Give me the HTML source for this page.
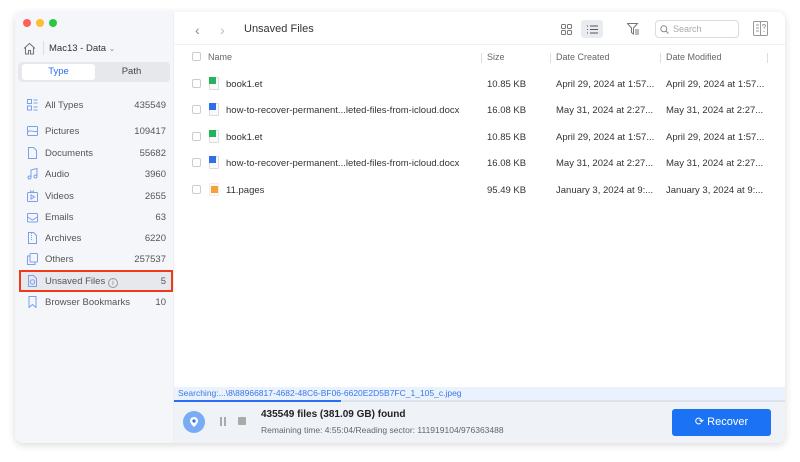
<!DOCTYPE html>
<html><head><meta charset="utf-8"><style>
*{margin:0;padding:0;box-sizing:border-box}
body{width:800px;height:462px;background:#fff;font-family:"Liberation Sans",sans-serif;position:relative;overflow:hidden;color:#333}
.a{position:absolute}
#win{left:15px;top:12px;width:770px;height:431px;border-radius:8px;background:#fff;box-shadow:0 2px 8px rgba(0,0,0,.15);overflow:hidden}
#side{left:0;top:0;width:159px;height:431px;background:#f5f6f9;border-right:1px solid #eceef2}
.dot{width:8px;height:8px;border-radius:50%;top:7px}
.it{left:5px;width:152px;height:21px;font-size:9.5px;color:#555}
.it .ic{position:absolute;left:7px;top:4px;width:11px;height:12px}
.it .t{position:absolute;left:25px;top:5px}
.it .n{position:absolute;right:6px;top:5px}
.hd{font-size:9px;color:#666;top:40px}
.row{left:159px;width:611px;height:26px;font-size:9.5px;color:#333}
.row span{position:absolute;top:8px}
.cb{position:absolute;left:18px;top:8px;width:9px;height:9px;border:1px solid #ccc;border-radius:2px;background:#fff}
.fi{position:absolute;left:35px;top:6px;width:10px;height:13px;border:1px solid #ddd;border-radius:1px;background:#fafafa}
.fi i{position:absolute;left:-1px;top:-1px;width:7px;height:7px}
.sep{width:1px;height:10px;background:#ddd;top:41px}
</style></head><body>
<div id="win" class="a">
 <div id="side" class="a">
  <div class="a dot" style="left:8px;background:#fe5f57"></div>
  <div class="a dot" style="left:21px;background:#febc2e"></div>
  <div class="a dot" style="left:34px;background:#28c840"></div>
  <svg class="a" style="left:8px;top:30px" width="13" height="13" viewBox="0 0 13 13" fill="none" stroke="#777" stroke-width="1.1"><path d="M1 6.5L6.5 1.5 12 6.5M2.5 5.5V12h3V8.5h2V12h3V5.5"/></svg>
  <div class="a" style="left:28px;top:29px;width:1px;height:14px;background:#ddd"></div>
  <div class="a" style="left:34px;top:31px;font-size:9.5px;color:#333">Mac13 - Data <span style="color:#888;font-size:8px">&#8964;</span></div>
  <div class="a" style="left:3px;top:50px;width:152px;height:20px;background:#e6e8ec;border-radius:4px"></div>
  <div class="a" style="left:7px;top:52px;width:73px;height:16px;background:#fff;border-radius:3px;color:#2a6df4;font-size:9.5px;text-align:center;line-height:16px">Type</div>
  <div class="a" style="left:80px;top:52px;width:73px;height:16px;color:#444;font-size:9.5px;text-align:center;line-height:16px">Path</div>

  <div class="a it" style="top:83px"><svg class="ic" viewBox="0 0 11 12" fill="none" stroke="#7aa0ee"><rect x=".5" y=".5" width="4" height="4"/><rect x=".5" y="7" width="4" height="4"/><path d="M6.5 1h4M6.5 4h4M6.5 8h4M6.5 11h4"/></svg><span class="t">All Types</span><span class="n">435549</span></div>
  <div class="a it" style="top:109px"><svg class="ic" viewBox="0 0 11 12" fill="none" stroke="#7aa0ee"><rect x=".5" y="1.5" width="10" height="9" rx="1"/><path d="M.5 7c3-3 6 1 10-1"/></svg><span class="t">Pictures</span><span class="n">109417</span></div>
  <div class="a it" style="top:131px"><svg class="ic" viewBox="0 0 11 12" fill="none" stroke="#7aa0ee"><path d="M1.5.5h5l3 3v8h-8z"/></svg><span class="t">Documents</span><span class="n">55682</span></div>
  <div class="a it" style="top:152px"><svg class="ic" viewBox="0 0 11 12" fill="none" stroke="#7aa0ee"><circle cx="2.5" cy="9.5" r="1.5"/><circle cx="8.5" cy="8.5" r="1.5"/><path d="M4 9.5V2l6-1.5v8"/></svg><span class="t">Audio</span><span class="n">3960</span></div>
  <div class="a it" style="top:174px"><svg class="ic" viewBox="0 0 11 12" fill="none" stroke="#7aa0ee"><rect x=".5" y="2.5" width="10" height="9" rx="1"/><path d="M4 5v4l3.5-2z M3 .5l2 2 2-2"/></svg><span class="t">Videos</span><span class="n">2655</span></div>
  <div class="a it" style="top:195px"><svg class="ic" viewBox="0 0 11 12" fill="none" stroke="#7aa0ee"><rect x=".5" y="2.5" width="10" height="8.5" rx="1"/><path d="M.5 6l5 3 5-3"/></svg><span class="t">Emails</span><span class="n">63</span></div>
  <div class="a it" style="top:216px"><svg class="ic" viewBox="0 0 11 12" fill="none" stroke="#7aa0ee"><path d="M1.5.5h5l3 3v8h-8z"/><path d="M4.5 1v7" stroke-dasharray="1 1"/></svg><span class="t">Archives</span><span class="n">6220</span></div>
  <div class="a it" style="top:237px"><svg class="ic" viewBox="0 0 11 12" fill="none" stroke="#7aa0ee"><rect x="3" y=".5" width="7.5" height="8.5" rx="1"/><path d="M3 3H.5v8.5h7.5V9"/></svg><span class="t">Others</span><span class="n">257537</span></div>
  <div class="a it" style="top:258px;left:4px;width:154px;height:22px;background:#e6e8ed;border:2px solid #f03a17"><svg class="ic" style="left:6px;top:3px" viewBox="0 0 11 12" fill="none" stroke="#7aa0ee"><path d="M1.5.5h5l3 3v8h-8z"/><circle cx="5.5" cy="7" r="2.2"/></svg><span class="t" style="left:24px;top:4px">Unsaved Files <span style="display:inline-block;width:10px;height:10px;border:1px solid #999;border-radius:50%;font-size:7px;text-align:center;line-height:9px;color:#888;vertical-align:-1px">i</span></span><span class="n" style="right:5px;top:4px">5</span></div>
  <div class="a it" style="top:280px"><svg class="ic" viewBox="0 0 11 12" fill="none" stroke="#7aa0ee"><path d="M2 .5h7v11L5.5 8.5 2 11.5z"/></svg><span class="t">Browser Bookmarks</span><span class="n">10</span></div>
 </div>

 <!-- toolbar -->
 <div class="a" style="left:180px;top:10px;font-size:14px;color:#888">&#8249;</div>
 <div class="a" style="left:205px;top:10px;font-size:14px;color:#bbb">&#8250;</div>
 <div class="a" style="left:229px;top:11px;font-size:11px;color:#333">Unsaved Files</div>
 <svg class="a" style="left:546px;top:12px" width="11" height="11" viewBox="0 0 11 11" fill="none" stroke="#777"><rect x=".5" y=".5" width="4" height="4" rx="1"/><rect x="6.5" y=".5" width="4" height="4" rx="1"/><rect x=".5" y="6.5" width="4" height="4" rx="1"/><rect x="6.5" y="6.5" width="4" height="4" rx="1"/></svg>
 <div class="a" style="left:566px;top:8px;width:22px;height:18px;background:#e8ebf0;border-radius:3px"></div>
 <svg class="a" style="left:572px;top:13px" width="11" height="9" viewBox="0 0 11 9" fill="none" stroke="#555"><path d="M0 1h1M3 1h8M0 4.5h1M3 4.5h8M0 8h1M3 8h8"/></svg>
 <svg class="a" style="left:612px;top:11px" width="13" height="12" viewBox="0 0 13 12" fill="none" stroke="#777"><path d="M.5.5h10L6.5 5v6L4.5 9.5V5zM8 7h4M8 9h4M8 11h4"/></svg>
 <div class="a" style="left:640px;top:8px;width:84px;height:18px;border:1px solid #d8dbe2;border-radius:4px;font-size:9px;color:#aaa;padding:3px 0 0 17px">Search</div>
 <svg class="a" style="left:645px;top:13px" width="9" height="9" viewBox="0 0 9 9" fill="none" stroke="#888"><circle cx="3.8" cy="3.8" r="3"/><path d="M6 6l2.5 2.5"/></svg>
 <svg class="a" style="left:738px;top:9px" width="15" height="15" viewBox="0 0 15 15" fill="none" stroke="#999"><rect x=".5" y=".5" width="14" height="14" rx="1"/><path d="M7.5 1v13M3 4h3M3 7h3M3 10h3M9.5 5a1.5 1.5 0 113 0c0 1-1.5 1-1.5 2.5M11 10v1"/></svg>
 <div class="a" style="left:159px;top:32px;width:611px;height:1px;background:#eef0f3"></div>

 <!-- header -->
 <div class="a" style="left:177px;top:40px;width:9px;height:9px;border:1px solid #ccc;border-radius:2px"></div>
 <div class="a hd" style="left:193px">Name</div>
 <div class="a sep" style="left:466px"></div>
 <div class="a hd" style="left:472px">Size</div>
 <div class="a sep" style="left:535px"></div>
 <div class="a hd" style="left:541px">Date Created</div>
 <div class="a sep" style="left:645px"></div>
 <div class="a hd" style="left:651px">Date Modified</div>
 <div class="a sep" style="left:752px"></div>

 <div class="a row" style="top:59px"><div class="cb"></div><div class="fi"><i style="background:#22b45a"></i></div><span style="left:52px">book1.et</span><span style="left:313px">10.85 KB</span><span style="left:382px">April 29, 2024 at 1:57...</span><span style="left:492px">April 29, 2024 at 1:57...</span></div>
 <div class="a row" style="top:85px"><div class="cb"></div><div class="fi"><i style="background:#2f6fe8"></i></div><span style="left:52px">how-to-recover-permanent...leted-files-from-icloud.docx</span><span style="left:313px">16.08 KB</span><span style="left:382px">May 31, 2024 at 2:27...</span><span style="left:492px">May 31, 2024 at 2:27...</span></div>
 <div class="a row" style="top:112px"><div class="cb"></div><div class="fi"><i style="background:#22b45a"></i></div><span style="left:52px">book1.et</span><span style="left:313px">10.85 KB</span><span style="left:382px">April 29, 2024 at 1:57...</span><span style="left:492px">April 29, 2024 at 1:57...</span></div>
 <div class="a row" style="top:138px"><div class="cb"></div><div class="fi"><i style="background:#2f6fe8"></i></div><span style="left:52px">how-to-recover-permanent...leted-files-from-icloud.docx</span><span style="left:313px">16.08 KB</span><span style="left:382px">May 31, 2024 at 2:27...</span><span style="left:492px">May 31, 2024 at 2:27...</span></div>
 <div class="a row" style="top:165px"><div class="cb"></div><div class="fi" style="border-color:#eee"><i style="background:#f7a035;left:1px;top:2px;width:7px"></i></div><span style="left:52px">11.pages</span><span style="left:313px">95.49 KB</span><span style="left:382px">January 3, 2024 at 9:...</span><span style="left:492px">January 3, 2024 at 9:...</span></div>

 <!-- status -->
 <div class="a" style="left:159px;top:375px;width:611px;height:13px;background:#eaf2fd;font-size:8.5px;color:#3a78e8;padding:1px 0 0 4px">Searching:...\8\88966817-4682-48C6-BF06-6620E2D5B7FC_1_105_c.jpeg</div>
 <div class="a" style="left:159px;top:388px;width:611px;height:2px;background:#dde3ec"></div>
 <div class="a" style="left:159px;top:388px;width:167px;height:2px;background:#2a6df4"></div>
 <div class="a" style="left:159px;top:390px;width:611px;height:41px;background:#eff2f7"></div>
 <div class="a" style="left:168px;top:399px;width:22px;height:22px;border-radius:50%;background:#7aacf6"></div>
 <svg class="a" style="left:175px;top:405px" width="8" height="10" viewBox="0 0 8 10"><path d="M4 0a4 4 0 014 4c0 2-2 4-4 6-2-2-4-4-4-6a4 4 0 014-4z" fill="#fff"/><circle cx="4" cy="4" r="1.6" fill="#2a6df4"/></svg>
 <div class="a" style="left:205px;top:405px;width:2px;height:9px;background:#aaa"></div>
 <div class="a" style="left:209px;top:405px;width:2px;height:9px;background:#aaa"></div>
 <div class="a" style="left:223px;top:405px;width:8px;height:8px;background:#aaa;border-radius:1px"></div>
 <div class="a" style="left:246px;top:397px;font-size:10px;font-weight:bold;color:#222">435549 files (381.09 GB) found</div>
 <div class="a" style="left:246px;top:413px;font-size:8.5px;color:#666">Remaining time: 4:55:04/Reading sector: 111919104/976363488</div>
 <div class="a" style="left:657px;top:397px;width:99px;height:27px;background:#1b72f4;border-radius:3px;color:#fff;font-size:11px;line-height:27px;text-align:center">&#10227; Recover</div>
</div>
</body></html>
